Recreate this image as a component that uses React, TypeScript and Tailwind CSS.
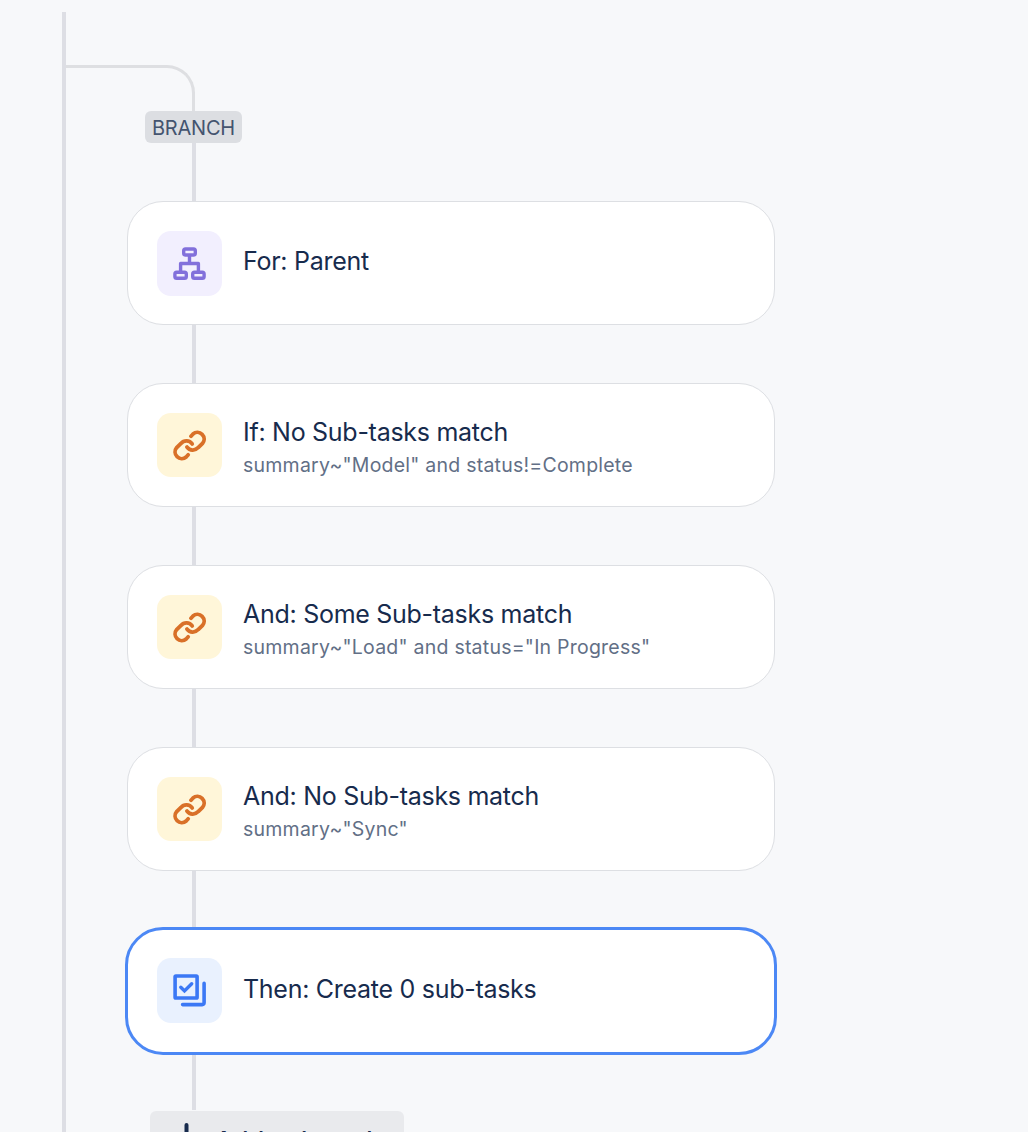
import React from "react";

function HierarchyIcon() {
  return (
    <svg
      width="33"
      height="33"
      viewBox="13 12 33 33"
      fill="none"
      stroke="#8270db"
      strokeWidth="3.4"
    >
      <rect x="23.7" y="14" width="11.6" height="6" rx="1.8" />
      <rect x="14.9" y="37.2" width="11.4" height="6" rx="1.8" />
      <rect x="32.7" y="37.2" width="11.4" height="6" rx="1.8" />
      <path d="M29.5 20v8M20.6 37v-8.5h17.8V37" strokeLinejoin="round" />
    </svg>
  );
}

function LinkIcon() {
  return (
    <svg
      width="33"
      height="33"
      viewBox="13 14 33 33"
      fill="none"
      stroke="#d97028"
      strokeWidth="3.8"
      strokeLinecap="round"
    >
      <path d="M31 21.2L33 19A6.7 6.7 0 0 1 42.5 28.4L38.2 32.6A7.2 7.2 0 0 1 27 32.1" />
      <path d="M28.2 39.8L26.2 42A6.7 6.7 0 0 1 16.7 32.6L21 28.4A7.2 7.2 0 0 1 32.2 28.9" />
    </svg>
  );
}

function SubtasksIcon() {
  return (
    <svg
      width="33"
      height="33"
      viewBox="13 14 33 33"
      fill="none"
      stroke="#3b78f5"
      strokeWidth="3.6"
      strokeLinecap="round"
    >
      <rect x="15.1" y="16" width="22" height="22" rx="0.8" />
      <path d="M20.8 27.2l3.7 3.7 7.2-7.2" strokeWidth="3.4" />
      <path d="M44.1 23.4v19.2a2 2 0 0 1-2 2H22.6" />
    </svg>
  );
}

function Connector() {
  return <div className="ml-[126px] h-[58px] w-1 shrink-0 bg-[#dddee4]" />;
}

const iconStyles = {
  branch: { tile: "h-[65px] bg-[#f2effe]", icon: <HierarchyIcon /> },
  condition: { tile: "h-16 bg-[#fff6d9]", icon: <LinkIcon /> },
  action: { tile: "h-[65px] bg-[#e9f1fe]", icon: <SubtasksIcon /> },
};

type StepProps = {
  type: keyof typeof iconStyles;
  title: string;
  detail?: string;
  selected?: boolean;
};

function StepCard({ type, title, detail, selected }: StepProps) {
  const { tile, icon } = iconStyles[type];
  return (
    <div
      className={
        selected
          ? "-mt-0.5 ml-[59px] flex h-[128px] w-[652px] shrink-0 items-start rounded-[38px] border-[3px] border-[#4c88f5] bg-white pl-[29px] pt-[28px]"
          : "ml-[61px] flex h-[124px] w-[648px] shrink-0 items-start rounded-[36px] border border-[#dddfe3] bg-white pl-[29px] pt-[29px]"
      }
    >
      <div
        className={`flex w-[65px] shrink-0 items-center justify-center rounded-[14px] ${tile}`}
      >
        {icon}
      </div>
      <div
        className={`ml-[21px] whitespace-nowrap ${detail ? "pt-[3px]" : selected ? "pt-[15px]" : "pt-[14px]"}`}
      >
        <p className="text-[25px] leading-8 tracking-[-0.28px] text-[#172b4d]">
          {title}
        </p>
        {detail && (
          <p className="mt-px text-[19.5px] leading-8 tracking-[0.23px] text-[#626f86]">
            {detail}
          </p>
        )}
      </div>
    </div>
  );
}

export default function App() {
  return (
    <div className="flex h-[1132px] w-[1028px] overflow-hidden bg-[#f7f8fa] pl-[62px] pt-3 font-['Inter',sans-serif]">
      <div className="w-1 shrink-0 bg-[#dddee4]" />
      <div className="flex flex-col items-start pt-[53px]">
        <div className="h-[46px] w-[129px] shrink-0 rounded-tr-[28px] border-r-[3px] border-t-[3px] border-[#dedfe2]" />
        <div className="ml-[79px] flex h-8 w-[97px] shrink-0 items-center justify-center rounded-md bg-[#dcdee2] pt-0.5 text-[20px] tracking-[-0.2px] text-[#44546f]">
          BRANCH
        </div>
        <Connector />
        <StepCard type="branch" title="For: Parent" />
        <Connector />
        <StepCard
          type="condition"
          title="If: No Sub-tasks match"
          detail={'summary~"Model" and status!=Complete'}
        />
        <Connector />
        <StepCard
          type="condition"
          title="And: Some Sub-tasks match"
          detail={'summary~"Load" and status="In Progress"'}
        />
        <Connector />
        <StepCard
          type="condition"
          title="And: No Sub-tasks match"
          detail={'summary~"Sync"'}
        />
        <Connector />
        <StepCard type="action" title="Then: Create 0 sub-tasks" selected />
        <div className="ml-[126px] h-[55px] w-1 shrink-0 bg-[#dddee4]" />
        <button className="ml-[84px] mt-px flex h-16 w-[254px] shrink-0 items-start rounded-md bg-[#e9eaed] pl-6 pt-3 text-[#172b4d]">
          <svg
            width="25"
            height="25"
            viewBox="0 0 25 25"
            stroke="#172b4d"
            strokeWidth="4"
            strokeLinecap="round"
          >
            <path d="M12.5 2v21M2 12.5h21" />
          </svg>
          <span className="ml-4 pt-0.5 text-[25px] font-medium leading-8 tracking-[0.4px]">
            Add sub-task
          </span>
        </button>
      </div>
    </div>
  );
}
